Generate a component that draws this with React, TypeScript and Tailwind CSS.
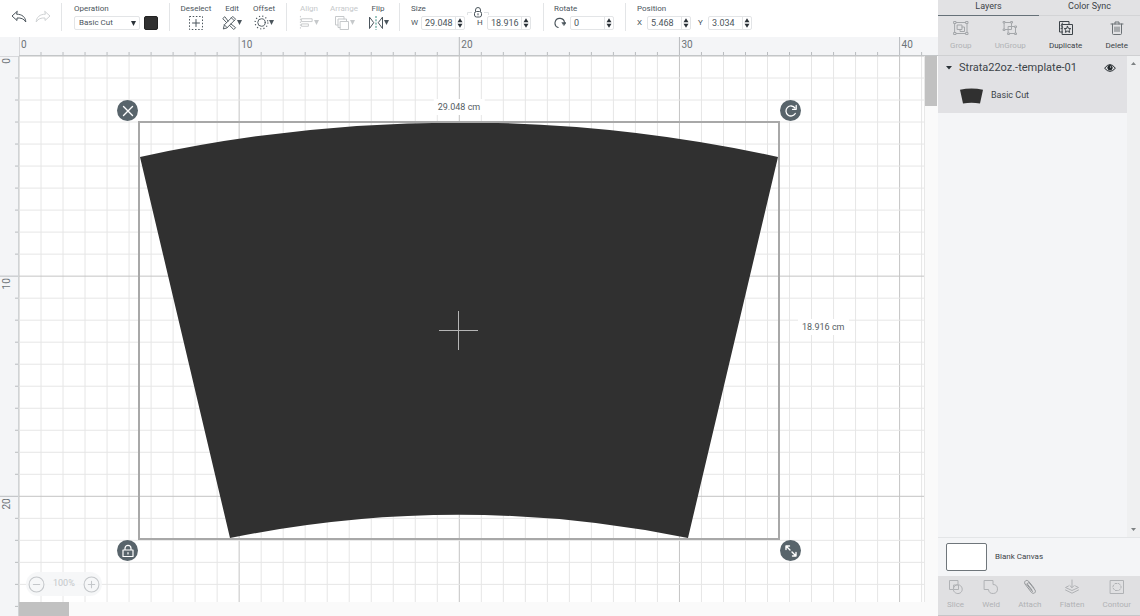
import type { ReactNode } from "react";
import { useState } from "react";

const STEP = 22.015;
const range = (n: number) => Array.from({ length: n }, (_, i) => i);

const Icon = ({ size = 16, children, className = "" }: { size?: number; children: ReactNode; className?: string }) => (
  <svg width={size} height={size} viewBox="0 0 16 16" fill="none" stroke="currentColor" strokeLinecap="round" strokeLinejoin="round" className={`shrink-0 ${className}`} aria-hidden="true">
    {children}
  </svg>
);

const Caret = () => (
  <svg width="5" height="5" viewBox="0 0 5 5" fill="currentColor" className="shrink-0" aria-hidden="true">
    <path d="M0 0h5L2.5 5z" />
  </svg>
);

/* Toolbar */

const ToolButton = ({ label, disabled, caret, children, className }: { label: string; disabled?: boolean; caret?: boolean; children: ReactNode; className: string }) => (
  <button disabled={disabled} className={`flex flex-col items-center text-[#4b555c] disabled:text-[#c6c9cb] ${className}`}>
    <span className="h-3 leading-3">{label}</span>
    <span className="flex h-4 items-center">
      {children}
      {caret && <Caret />}
    </span>
  </button>
);

const NumberField = ({ label, name, value }: { label?: string; name: string; value: string }) => {
  const [text, setText] = useState(value);
  return (
    <label className="flex items-center text-[8px]">
      {label && <span className="w-[10px]">{label}</span>}
      <span className="flex h-[14px] w-11 items-center rounded-xs border border-[#e3e5e7] bg-white">
        <input aria-label={name} value={text} onChange={(e) => setText(e.target.value)} className="w-8 min-w-0 pl-[3px] text-[9px] leading-3 outline-none" />
        <svg width="10" height="12" viewBox="0 0 10 12" fill="currentColor" className="shrink-0" aria-hidden="true">
          <path d="M1.5 0v12" stroke="#e3e5e7" />
          <path d="M6 1.300 8.500 5.200h-5zM6 10.700 8.500 6.800h-5z" fill="#2b3238" />
        </svg>
      </span>
    </label>
  );
};

const Toolbar = () => (
  <header className="flex h-[37px] shrink-0 items-center bg-white pb-1 text-[8px] text-[#4b555c]">
    <div className="flex h-7 w-[61px] items-center gap-2 pl-[11px]">
      <button aria-label="Undo"><Icon><path d="M6 2.500 1 7l5 4.500V9c4-.3 7 .8 8.800 4C14.500 8 11 5.200 6 5.200z" /></Icon></button>
      <button aria-label="Redo" disabled className="text-[#cfd2d4]"><Icon><path d="m10 2.500 5 4.500-5 4.500V9c-4-.3-7 .8-8.800 4C1.500 8 5 5.200 10 5.200z" /></Icon></button>
    </div>

    <div className="flex h-7 w-[108px] flex-col border-l border-[#e3e5e7] pl-3">
      <label htmlFor="operation" className="h-3 leading-3">Operation</label>
      <div className="flex h-4 items-center gap-1">
        <div className="relative">
          <select id="operation" className="h-[14px] w-[66px] appearance-none rounded-xs border border-[#e3e5e7] pl-1 text-[8px] leading-3">
            <option>Basic Cut</option>
          </select>
          <span className="pointer-events-none absolute right-1 top-[5px] text-[#2b3238]"><Caret /></span>
        </div>
        <button aria-label="Material color" className="size-[14px] rounded-xs border border-[#222] bg-[#303030]" />
      </div>
    </div>

    <div className="flex h-7 w-[117px] border-l border-[#e3e5e7] pl-[6px]">
      <ToolButton label="Deselect" className="w-10">
        <Icon>
          <path d="M1.500 1.500h13v13h-13z" strokeDasharray="1.500 1.700" strokeLinecap="butt" />
          <path d="M8 4.500v7M4.500 8h7" />
        </Icon>
      </ToolButton>
      <ToolButton label="Edit" caret className="w-8">
        <Icon size={15}>
          <path d="m1.500 14.500 1-4L11.500 1.500l3 3L5.500 13.500z" />
          <path d="M6.500 6.500 3 1.800.8 3.800 4.800 8M9.500 9.500l5 4-2 2-4.500-4.500M10 3l3 3M2.500 10.500l3 3" />
        </Icon>
      </ToolButton>
      <ToolButton label="Offset" caret className="w-8">
        <Icon size={15}>
          <circle cx="8" cy="8" r="4" />
          <circle cx="8" cy="8" r="6.800" strokeDasharray="1.200 2.360" strokeWidth="1.300" strokeLinecap="butt" />
        </Icon>
      </ToolButton>
    </div>

    <div className="flex h-7 w-[113px] border-l border-[#e3e5e7] pl-[5px]">
      <ToolButton label="Align" caret disabled className="w-[34px]">
        <Icon size={15}>
          <path d="M1.500 1v14" strokeDasharray="1.500 1.500" strokeLinecap="butt" />
          <path d="M3 4h11v3H3zM3 9.500h7v2.500H3z" />
        </Icon>
      </ToolButton>
      <ToolButton label="Arrange" caret disabled className="w-9">
        <Icon>
          <path d="M4 10H1.500V1.500H10V4M6 12.500H4V4h8.500v2" />
          <path d="M6.500 6.500h8v8h-8z" />
        </Icon>
      </ToolButton>
      <ToolButton label="Flip" caret className="w-8">
        <Icon>
          <path d="M1.500 2.500v11l4-5.500zM14.500 2.500v11l-4-5.500z" />
          <path d="M8 1v14" strokeDasharray="2 1.300" strokeLinecap="butt" stroke="#3b8f83" />
        </Icon>
      </ToolButton>
    </div>

    <div className="relative flex h-7 w-36 flex-col border-l border-[#e3e5e7] pl-[11px]">
      <span className="h-3 leading-3">Size</span>
      <div className="flex h-4 items-center gap-3">
        <NumberField label="W" name="Width" value="29.048" />
        <NumberField label="H" name="Height" value="18.916" />
      </div>
      <button aria-label="Lock proportions" className="absolute left-[67px] top-1 flex">
        <svg width="22" height="12" viewBox="0 0 22 12" fill="none" stroke="currentColor" aria-hidden="true">
          <path d="M.5 8V5.500H5M21.500 8V5.500H17" stroke="#dfe2e4" />
          <path d="M8.500 4.500V3a2.500 2.500 0 0 1 5 0v1.500" />
          <rect x="7.500" y="4.500" width="7" height="5.500" rx="2" />
          <path d="M11 6.300v2" />
        </svg>
      </button>
    </div>

    <div className="flex h-7 w-[82px] flex-col border-l border-[#e3e5e7] pl-[10px]">
      <span className="h-3 leading-3">Rotate</span>
      <div className="flex h-4 items-center gap-1">
        <Icon size={12}><path d="M5.500 14A6.300 6.300 0 1 1 14 8" strokeWidth="1.500" /><path d="M11 7.500h5l-2.500 3.500z" fill="currentColor" /></Icon>
        <NumberField name="Rotation" value="0" />
      </div>
    </div>

    <div className="flex h-7 flex-col border-l border-[#e3e5e7] pl-[11px]">
      <span className="h-3 leading-3">Position</span>
      <div className="flex h-4 items-center gap-[7px]">
        <NumberField label="X" name="X position" value="5.468" />
        <NumberField label="Y" name="Y position" value="3.034" />
      </div>
    </div>
  </header>
);

/* Rulers */

const TopRuler = () => (
  <svg className="h-[19px] min-w-0 flex-1 bg-[#f4f5f7]" aria-label="Horizontal ruler">
    {range(42).map((i) => (
      <line key={i} x1={i * STEP} x2={i * STEP} y1={i % 10 ? 15 : 0} y2="19" stroke="#b9bcbf" />
    ))}
    {[0, 10, 20, 30, 40].map((n) => (
      <text key={n} x={n * STEP + 2} y="11" fontSize="10" fill="#6c7378">{n}</text>
    ))}
    <line x1="0" x2="100%" y1="18.500" y2="18.500" stroke="#c3c6c8" />
  </svg>
);

const LeftRuler = () => (
  <svg className="h-full w-[19px] shrink-0 bg-[#f4f5f7]" aria-label="Vertical ruler">
    {range(26).map((i) => (
      <line key={i} x1={i % 10 ? 15 : 0} x2="19" y1={i * STEP} y2={i * STEP} stroke="#b9bcbf" />
    ))}
    {[0, 10, 20].map((n) => (
      <text key={n} transform={`translate(10 ${n * STEP + 2}) rotate(-90)`} textAnchor="end" fontSize="10" fill="#6c7378">{n}</text>
    ))}
    <line x1="18.500" x2="18.500" y1="0" y2="100%" stroke="#d0d3d5" />
  </svg>
);

/* Canvas */

const Handle = ({ label, className, children }: { label: string; className: string; children: ReactNode }) => (
  <button aria-label={label} className={`absolute flex size-[21px] items-center justify-center rounded-full bg-[#58646b] text-white ${className}`}>
    {children}
  </button>
);

const Canvas = () => (
  <main className="relative min-w-0 flex-1 overflow-hidden bg-white">
    <svg className="absolute inset-0 size-full" aria-hidden="true">
      {range(42).map((i) => (
        <line key={`v${i}`} x1={i * STEP} x2={i * STEP} y1="0" y2="100%" stroke={i % 10 ? "#e6e6e6" : "#c4c4c4"} />
      ))}
      {range(26).map((i) => (
        <line key={`h${i}`} x1="0" x2="100%" y1={i * STEP} y2={i * STEP} stroke={i % 10 ? "#e6e6e6" : "#c4c4c4"} />
      ))}
    </svg>

    {/* selected shape */}
    <div className="absolute left-[119px] top-[65px] h-[419px] w-[642px]">
      <svg width="642" height="419" viewBox="0 0 642 419" aria-label="Strata22oz template">
        <path d="M2 36A1490 1490 0 0 1 640 36L550 417A1150 1150 0 0 0 92 417Z" fill="#303030" />
        <rect x="1" y="1" width="640" height="417" fill="none" stroke="#a8a8a8" strokeWidth="2" />
        <path d="M301 209.500h39M320.500 190v39" stroke="#b5b5b5" />
      </svg>
      <span className="absolute -top-[22px] left-1/2 -translate-x-1/2 whitespace-nowrap bg-white px-1 text-[9px] leading-4 text-[#545d63]">29.048 cm</span>
      <span className="absolute left-[660px] top-[198px] whitespace-nowrap bg-white px-1 text-[9px] leading-4 text-[#545d63]">18.916 cm</span>
      <Handle label="Remove" className="-left-[21px] -top-[21px]">
        <Icon><path d="m3.500 3.500 9 9M12.500 3.500l-9 9" strokeWidth="1.400" /></Icon>
      </Handle>
      <Handle label="Rotate" className="-right-[21px] -top-[21px]">
        <Icon><path d="M12.300 10.500A5 5 0 1 1 12 5" strokeWidth="1.300" /><path d="M13.200 2.500v3.800H9.500" strokeWidth="1.300" /></Icon>
      </Handle>
      <Handle label="Lock" className="-bottom-[21px] -left-[21px]">
        <Icon><path d="M3 7h10v6.500H3zM5 7V5.300a3 3 0 0 1 6 0V7M8 9.500v1.500" strokeWidth="1.200" /></Icon>
      </Handle>
      <Handle label="Resize" className="-bottom-[21px] -right-[21px]">
        <Icon>
          <path d="M3 6.500V3h3.500M3 3l4 4M9 9l4 4M9.500 13H13V9.500" strokeWidth="1.400" />
        </Icon>
      </Handle>
    </div>

    <div className="absolute bottom-[6px] left-[7px] flex h-6 items-center gap-2 rounded-full bg-[#f5f6f7]/90 px-[2px] text-[9px] text-[#c4c7ca]">
      <button aria-label="Zoom out"><Icon size={17}><circle cx="8" cy="8" r="7" /><path d="M5 8h6" /></Icon></button>
      <span>100%</span>
      <button aria-label="Zoom in"><Icon size={17}><circle cx="8" cy="8" r="7" /><path d="M5 8h6M8 5v6" /></Icon></button>
    </div>
  </main>
);

/* Layers panel */

const PanelButton = ({ label, disabled, children }: { label: string; disabled?: boolean; children: ReactNode }) => (
  <button disabled={disabled} className="flex flex-col items-center gap-1 text-[8px] leading-3 text-[#3c4348] disabled:text-[#b0b2b5]">
    {children}
    {label}
  </button>
);

const Layers = () => (
  <aside className="flex w-[202px] shrink-0 flex-col bg-[#f4f5f7] text-[#3c4348]">
    <div className="grid h-4 shrink-0 grid-cols-2 bg-[#e2e2e4] text-[9px] leading-3">
      <button className="border-b border-[#667178] pb-[3px]">Layers</button>
      <button className="border-b border-[#d3d4d6] pb-[3px]">Color Sync</button>
    </div>
    <div className="flex h-10 shrink-0 items-start justify-between border-b border-[#cfd0d2] bg-[#e2e2e4] px-3 pt-1">
      <PanelButton label="Group" disabled>
        <Icon className="text-[#a4a7aa]">
          <path d="M2 2.500h12v11H2zM4.500 5H9v4.500H4.500zM9 7h2.500v4.500H7v-2" />
          <path d="M1 1.500h2v2H1zM13 1.500h2v2h-2zM1 12.500h2v2H1zM13 12.500h2v2h-2z" fill="#e2e2e4" />
        </Icon>
      </PanelButton>
      <PanelButton label="UnGroup" disabled>
        <Icon className="text-[#a4a7aa]">
          <path d="M2.500 2.500h7v7h-7zM6.500 6.500h7v7h-7z" />
          <path d="M1.500 1.500H3V3H1.500zM9 1.500h1.500V3H9zM1.500 9H3v1.500H1.500zM13 6h1.500v1.500H13zM6 13h1.500v1.500H6zM13 13h1.500v1.500H13z" fill="#e2e2e4" />
        </Icon>
      </PanelButton>
      <PanelButton label="Duplicate">
        <Icon>
          <path d="M4.500 12h-3V1.500H11V4M4.500 4.500h10v10h-10z" />
          <path d="m9.500 6.300 1 2.100 2.300.2-1.700 1.500.5 2.300-2.100-1.200-2.100 1.200.5-2.300-1.700-1.500 2.300-.2zM4.500 3 3.200 5.500 4.500 7M3 8.500l1.500-.5" />
        </Icon>
      </PanelButton>
      <PanelButton label="Delete">
        <Icon className="text-[#6b7175]"><path d="M2 4h12M6 4V2h4v2M3.500 4v9.500q0 1 1 1h7q1 0 1-1V4M6 7v4.500M8 7v4.500M10 7v4.500" /></Icon>
      </PanelButton>
    </div>

    <div className="flex min-h-0 flex-1">
      <div className="min-w-0 flex-1">
        <section className="bg-[#e1e1e4] pb-[2px] pl-2 pr-[11px]">
          <div className="flex h-6 items-center">
            <button aria-label="Collapse group" className="w-[13px]">
              <svg width="6" height="4" viewBox="0 0 6 4" fill="#2b3238"><path d="M0 0h6L3 3.500z" /></svg>
            </button>
            <span className="flex-1 whitespace-nowrap text-[11px]">Strata22oz.-template-01</span>
            <button aria-label="Toggle visibility">
              <svg width="12" height="10" viewBox="0 0 12 10" fill="none" stroke="#20262a" aria-hidden="true">
                <path d="M.6 5.200Q6-2 11.400 5.200 6 11.500.6 5.200z" />
                <circle cx="6" cy="4.700" r="2.200" fill="#20262a" />
                <circle cx="6.600" cy="4" r=".4" stroke="#fff" strokeWidth=".6" />
              </svg>
            </button>
          </div>
          <div className="flex h-[31px] items-center gap-[7px] pl-[13px]">
            <svg width="25" height="16" viewBox="0 0 25 16" aria-hidden="true"><path d="M1 1.800Q12.500-.6 24 1.800L21 15.500Q12.500 14 4 15.500Z" fill="#303030" /></svg>
            <span className="text-[9px]">Basic Cut</span>
          </div>
        </section>
      </div>
      <div className="flex w-[13px] flex-col items-center justify-between bg-[#eff0f1] py-1 text-[#7d8183]">
        <svg width="5" height="6" viewBox="0 0 5 6" fill="currentColor"><path d="M0 5h5L2.500 2z" /></svg>
        <svg width="5" height="6" viewBox="0 0 5 6" fill="currentColor"><path d="M0 1h5L2.500 4z" /></svg>
      </div>
    </div>

    <div className="flex h-[39px] shrink-0 items-center gap-2 border-t border-[#e3e5e7] pl-2 text-[8px]">
      <button aria-label="Canvas color" className="h-7 w-[41px] rounded-xs border border-[#6f767b] bg-white" />
      Blank Canvas
    </div>

    <div className="flex h-10 shrink-0 items-start justify-between border-b border-[#c5c6c8] bg-[#e0e0e2] px-[9px] pt-[3px]">
      <PanelButton label="Slice" disabled>
        <Icon><path d="M5 10.500H1.500v-9H10V5M6 6h4.500v4.500H6z" /><path d="M11 5.800a4.500 4.500 0 1 1-5.500 5.700" /><path d="M5.300 10a4.500 4.500 0 0 1 4.700-4.400" /></Icon>
      </PanelButton>
      <PanelButton label="Weld" disabled>
        <Icon><path d="M1.500 1.500H10v4a4.500 4.500 0 1 1-4.500 5h-4z" /></Icon>
      </PanelButton>
      <PanelButton label="Attach" disabled>
        <Icon className="text-[#94979a]"><path d="m4.500 5 6 7.500M12 9 6.500 2.200C4.500.2 1.500 2.500 3 5l6.500 8.500c2 2 5 0 3.500-2.500L7.500 4C6 3 5 4.500 5.700 5.500L10 11" /></Icon>
      </PanelButton>
      <PanelButton label="Flatten" disabled>
        <Icon><path d="M8 1v7.500M5.800 6.500 8 8.700l2.200-2.200M4.500 7 1.500 8.500 8 11.500l6.500-3-3-1.500M1.500 11 8 14.200l6.500-3.200" /></Icon>
      </PanelButton>
      <PanelButton label="Contour" disabled>
        <Icon><path d="M1.500 1.500h13v13h-13z" /><path d="M6 4.500h4L12 7v2l-2 2.500H6L4 9V7z" strokeDasharray="2 1.500" /></Icon>
      </PanelButton>
    </div>
  </aside>
);

const App = () => (
  <div className="flex h-screen w-full overflow-hidden bg-white font-[Roboto,sans-serif]">
    <div className="flex min-w-0 flex-1 flex-col">
      <Toolbar />
      <div className="flex shrink-0 bg-[#f4f5f7] pl-[19px]">
        <TopRuler />
      </div>
      <div className="flex min-h-0 flex-1">
        <LeftRuler />
        <div className="flex min-w-0 flex-1 flex-col">
          <div className="flex min-h-0 flex-1">
            <Canvas />
            <div className="w-[14px] shrink-0 border-l border-[#e8e8e8] bg-[#fafafa]">
              <div className="h-[50px] w-3 bg-[#c1c1c1]" />
            </div>
          </div>
          <div className="h-[14px] shrink-0 bg-[#fafafa]">
            <div className="h-full w-[50px] bg-[#c1c1c1]" />
          </div>
        </div>
      </div>
    </div>
    <Layers />
  </div>
);

export default App;
